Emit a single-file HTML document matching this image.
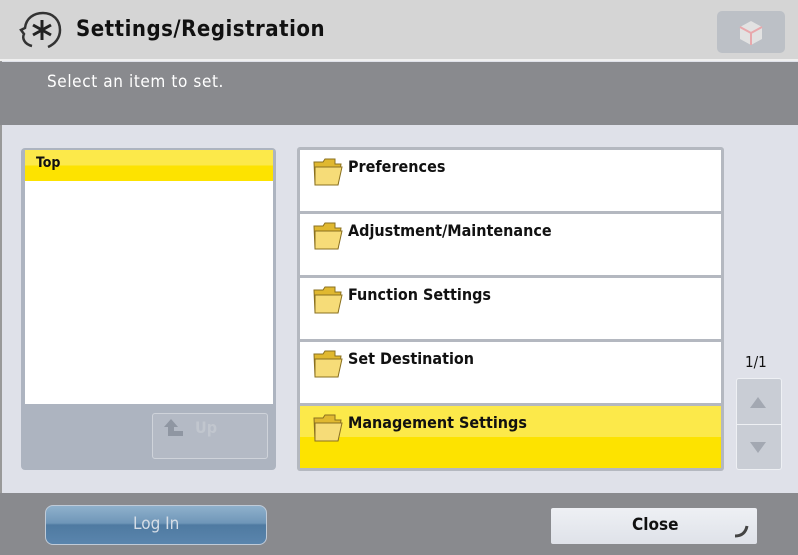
<!DOCTYPE html>
<html><head><style>
*{margin:0;padding:0;box-sizing:border-box}
body{width:798px;height:555px;overflow:hidden;font-family:"DejaVu Sans Condensed","DejaVu Sans","Liberation Sans",sans-serif;background:#dfe1e9;position:relative}
.a{position:absolute}
.hdr{left:0;top:0;width:798px;height:61px;background:#d5d5d5;border-bottom:2px solid #f0f0f0}
.band{left:0;top:62px;width:798px;height:63px;background:#898a8e}
.bot{left:0;top:493px;width:798px;height:62px;background:#898a8e}
.row{left:300px;width:421px;height:63px;background:#fff;border-bottom:2px solid #b4b8c0}
.row span{position:absolute;left:48px;top:7px;font-size:16px;font-weight:bold;color:#111}
.row svg{position:absolute;left:12px;top:5px}
</style></head><body>
<div class="a" style="left:0;top:0;width:2px;height:555px;background:#999"></div>
<div class="a hdr"></div>
<svg class="a" style="left:18px;top:10px" width="46" height="42" viewBox="0 0 46 42"><path d="M14 36 C6 34 4 28 6 24 L3 20 L7 18 C8 8 16 3 25 3 C35 3 42 10 42 20 C42 28 37 34 30 37" fill="none" stroke="#333" stroke-width="2.5"/><path d="M24 10 V30 M15 15 L33 25 M33 15 L15 25" stroke="#222" stroke-width="3"/></svg>
<div class="a" style="left:76px;top:17px;font-size:22px;font-weight:bold;color:#111;letter-spacing:0.5px">Settings/Registration</div>
<div class="a" style="left:717px;top:11px;width:68px;height:42px;border-radius:5px;background:#bcc0c6"></div>
<svg class="a" style="left:738px;top:19px" width="26" height="28" viewBox="0 0 26 28"><path d="M13 2 L24 8 V20 L13 26 L2 20 V8Z" fill="#e2e2e2"/><path d="M2 8 L13 14 L24 8 M13 14 V26" stroke="#e8a8ac" stroke-width="2" fill="none"/></svg>
<div class="a band"></div>
<div class="a" style="left:47px;top:72px;font-size:17px;color:#fff;letter-spacing:0.6px">Select an item to set.</div>

<div class="a" style="left:21px;top:148px;width:255px;height:322px;background:#adb4c0;border-radius:4px"></div>
<div class="a" style="left:25px;top:150px;width:248px;height:254px;background:#fff"></div>
<div class="a" style="left:25px;top:150px;width:248px;height:31px;background:linear-gradient(#fce94a 0 50%,#fde300 50%)"></div>
<div class="a" style="left:36px;top:155px;font-size:14px;font-weight:bold;color:#111">Top</div>
<div class="a" style="left:152px;top:413px;width:116px;height:46px;border:1px solid #cfd3da;border-radius:3px;background:#b4bac5"></div>
<svg class="a" style="left:163px;top:418px" width="22" height="20" viewBox="0 0 22 20"><path d="M8 1 L1 9 H5 V18 H20 V13 H11 V9 H15Z" fill="#8f96a2"/></svg>
<div class="a" style="left:195px;top:418px;font-size:16px;font-weight:bold;color:#c1c6ce">Up</div>

<div class="a" style="left:297px;top:147px;width:427px;height:324px;background:#b4b8c0;border-radius:3px"></div>
<div class="a row" style="top:150px"><svg width="32" height="32"><path d="M2 7 H11 L13 4 H23 V9 H29 L26 30 H3Z" fill="#e0b830" stroke="#8a7020"/><path d="M3 12 H30 L26 30 H3Z" fill="#f6dc78" stroke="#8a7020"/></svg><span>Preferences</span></div>
<div class="a row" style="top:214px"><svg width="32" height="32"><path d="M2 7 H11 L13 4 H23 V9 H29 L26 30 H3Z" fill="#e0b830" stroke="#8a7020"/><path d="M3 12 H30 L26 30 H3Z" fill="#f6dc78" stroke="#8a7020"/></svg><span>Adjustment/Maintenance</span></div>
<div class="a row" style="top:278px"><svg width="32" height="32"><path d="M2 7 H11 L13 4 H23 V9 H29 L26 30 H3Z" fill="#e0b830" stroke="#8a7020"/><path d="M3 12 H30 L26 30 H3Z" fill="#f6dc78" stroke="#8a7020"/></svg><span>Function Settings</span></div>
<div class="a row" style="top:342px"><svg width="32" height="32"><path d="M2 7 H11 L13 4 H23 V9 H29 L26 30 H3Z" fill="#e0b830" stroke="#8a7020"/><path d="M3 12 H30 L26 30 H3Z" fill="#f6dc78" stroke="#8a7020"/></svg><span>Set Destination</span></div>
<div class="a row" style="top:406px;height:62px;border:0;background:linear-gradient(#fce94a 0 50%,#fde300 50%)"><svg width="32" height="32"><path d="M2 7 H11 L13 4 H23 V9 H29 L26 30 H3Z" fill="#e0b830" stroke="#8a7020"/><path d="M3 12 H30 L26 30 H3Z" fill="#f6dc78" stroke="#8a7020"/></svg><span>Management Settings</span></div>

<div class="a" style="left:745px;top:353px;font-size:15px;color:#111">1/1</div>
<div class="a" style="left:736px;top:378px;width:46px;height:92px;background:#c9cdd5;border:1px solid #eef0f4;border-radius:3px"></div>
<div class="a" style="left:737px;top:424px;width:44px;height:1px;background:#eef0f4"></div>
<div class="a" style="left:750px;top:397px;border-left:8px solid transparent;border-right:8px solid transparent;border-bottom:11px solid #a3a8b2"></div>
<div class="a" style="left:750px;top:442px;border-left:8px solid transparent;border-right:8px solid transparent;border-top:11px solid #a3a8b2"></div>

<div class="a bot"></div>
<div class="a" style="left:45px;top:505px;width:222px;height:40px;border-radius:8px;border:1px solid #c0cbd8;background:linear-gradient(#8fb1cc 0,#6f96b8 45%,#4f7aa1 50%,#5a85ad 100%)"></div>
<div class="a" style="left:133px;top:514px;font-size:17px;color:#d5dde6">Log In</div>
<div class="a" style="left:551px;top:508px;width:206px;height:36px;border-radius:2px;background:linear-gradient(#eef0f4,#dfe2e9)"></div>
<div class="a" style="left:632px;top:515px;font-size:17px;font-weight:bold;color:#111">Close</div>
<svg class="a" style="left:733px;top:524px" width="18" height="14"><path d="M2 12 Q12 12 14 2" stroke="#444" stroke-width="3" fill="none"/></svg>
</body></html>
